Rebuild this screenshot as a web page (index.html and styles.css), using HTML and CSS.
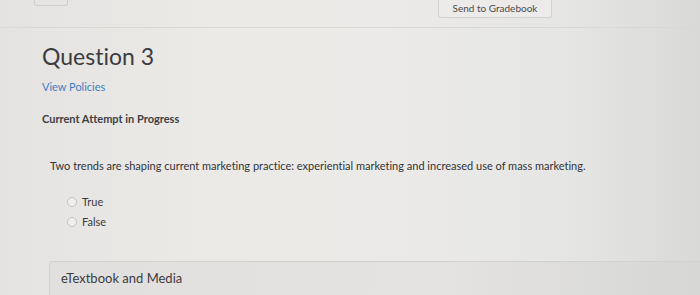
FILE: index.html
```html
<!DOCTYPE html>
<html>
<head>
<meta charset="utf-8">
<link rel="stylesheet" href="styles.css">
</head>
<body>
<div class="page">
  <header class="topbar">
    <div class="tab-stub"></div>
    <button class="grade-btn">Send to Gradebook</button>
  </header>
  <main class="content">
    <h1 class="title">Question 3</h1>
    <a class="policies" href="#">View Policies</a>
    <p class="attempt">Current Attempt in Progress</p>
    <p class="question">Two trends are shaping current marketing practice: experiential marketing and increased use of mass marketing.</p>
    <div class="options">
      <label class="opt"><span class="radio"></span>True</label>
      <label class="opt"><span class="radio"></span>False</label>
    </div>
    <div class="media">eTextbook and Media</div>
  </main>
</div>
</body>
</html>
```
FILE: styles.css
```css
* { box-sizing: border-box; }
html, body { margin: 0; padding: 0; }
body {
  width: 700px;
  height: 295px;
  overflow: hidden;
  font-family: Lato, "Open Sans", sans-serif;
  font-variant-ligatures: none;
  background: linear-gradient(90deg, #e4e3e1 0%, #ebeae7 30%, #ebeae8 55%, #e6e6e4 80%, #d9d9d8 100%);
  color: #3f3f42;
}
.page { width: 700px; height: 295px; }
.topbar {
  height: 28px;
  border-bottom: 1px solid #d9d8d5;
  display: flex;
  align-items: flex-start;
  padding-left: 34px;
}
.tab-stub {
  width: 34px;
  height: 6px;
  border: 1px solid #cfcecb;
  border-top: none;
  border-radius: 0 0 3px 3px;
}
.grade-btn {
  margin-left: 370px;
  width: 114px;
  height: 18px;
  padding: 0 0 2px;
  font-family: Lato, sans-serif;
  font-size: 10px;
  color: #4a4a4c;
  background: #ecebe9;
  border: 1px solid #d3d2cf;
  border-top: none;
  border-radius: 0 0 3px 3px;
  line-height: 14px;
}
.content {
  padding-left: 42px;
  display: flex;
  flex-direction: column;
  align-items: flex-start;
}
.title {
  margin: 13px 0 0;
  font-size: 23px;
  font-weight: 400;
  line-height: 30px;
  color: #3c3c40;
}
.policies {
  margin-top: 9px;
  font-size: 11px;
  line-height: 14px;
  color: #3d7fc0;
  text-decoration: none;
}
.attempt {
  margin: 18px 0 0;
  font-size: 11px;
  line-height: 14px;
  font-weight: 700;
  color: #404044;
}
.question {
  margin: 33px 0 0 8px;
  font-size: 11px;
  line-height: 14px;
  color: #333336;
}
.options {
  margin: 22px 0 0 25px;
  display: flex;
  flex-direction: column;
  gap: 6px;
}
.opt {
  display: flex;
  align-items: center;
  gap: 5px;
  font-size: 11px;
  line-height: 14px;
  color: #3a3a3d;
}
.radio {
  width: 10px;
  height: 10px;
  border: 1px solid #c3c3c2;
  border-radius: 50%;
  background: #efeeec;
}
.media {
  margin: 32px 0 0 7px;
  width: 660px;
  height: 40px;
  padding: 8px 0 0 11px;
  font-size: 13px;
  line-height: 16px;
  color: #3c3c3f;
  background: linear-gradient(90deg, #e1e0de, #e4e3e1 60%, #d6d6d5);
  border: 1px solid #d2d1ce;
  border-radius: 3px 0 0 0;
}
```
